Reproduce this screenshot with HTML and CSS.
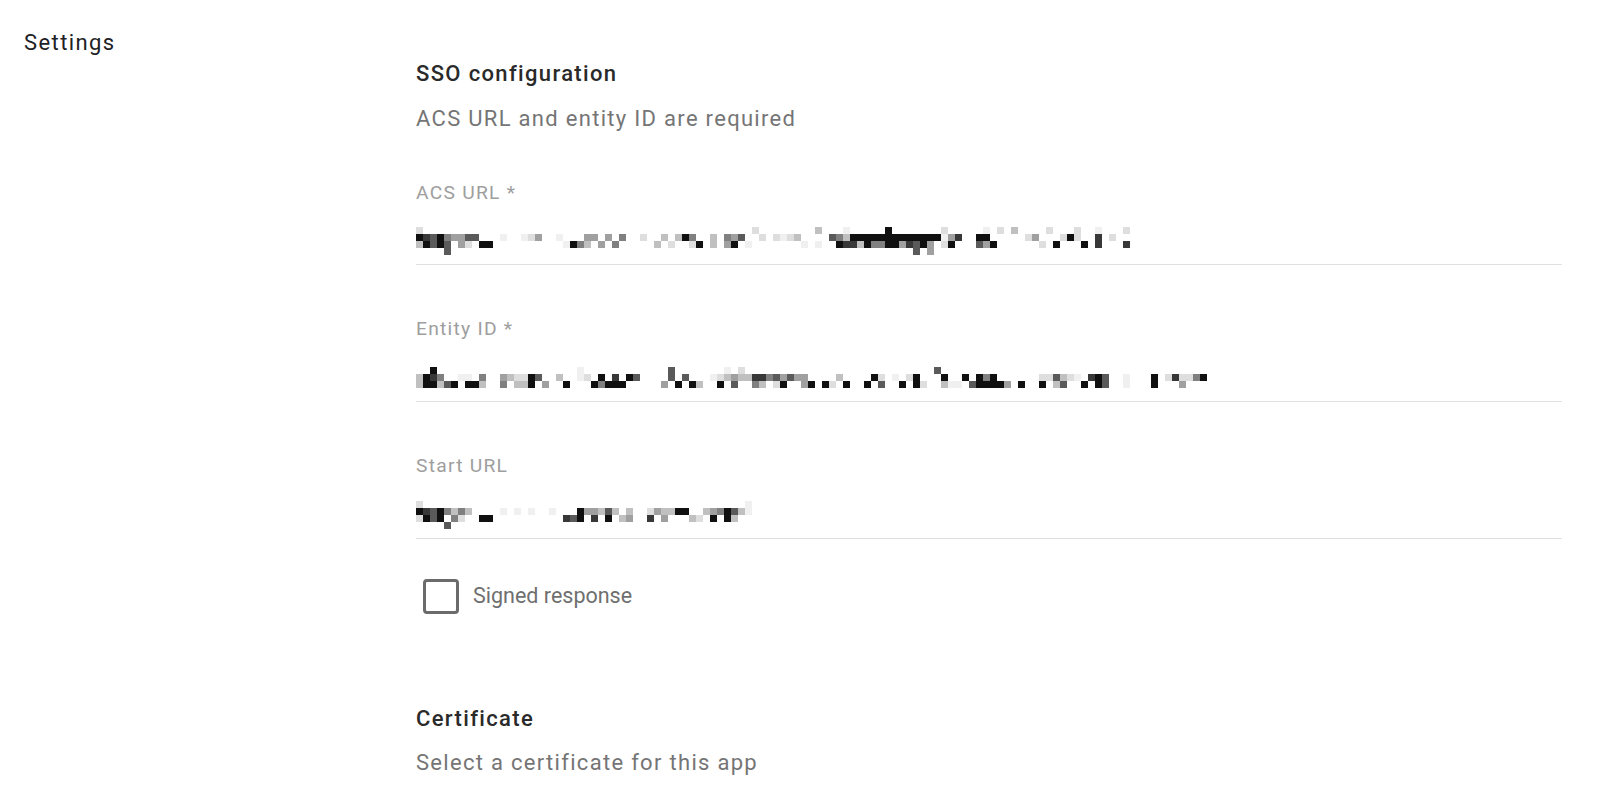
FILE: index.html
```html
<!DOCTYPE html>
<html lang="en">
<head>
<meta charset="utf-8">
<title>Settings</title>
<link rel="stylesheet" href="styles.css">
</head>
<body>
<div class="page">
  <aside class="side">
    <div class="side-title">Settings</div>
  </aside>
  <main class="content">
    <section class="section">
      <h2 class="section-title">SSO configuration</h2>
      <p class="section-desc">ACS URL and entity ID are required</p>
      <div class="fields">
        <div class="field">
          <label class="field-label">ACS URL *</label>
          <div class="field-value">
            <div class="mosaic" aria-label="redacted value" data-rows="2......... .......... .......... .......... ........2. .......3.. .1.....8.. .....2.... .1.2.3.... 2...2..1.. .2|876854466. ..1..124.. 1...44.4.5 ..2..3.385 ..3.546..2 .2123....6 5388888888 88888147.. 88.....24. ..282..7.2 ..|38686.42.8 8......... .1853.4.5. ....3.2..2 8.3.48.1.. .....1.1.. 8773855884 7684.28... 648......2 .8...8.7.. .7|....6..... .......... .......... .......... .......... .......... .......... .6.4......"></div>
          </div>
        </div>
        <div class="field">
          <label class="field-label">Entity ID *</label>
          <div class="field-value">
            <div class="mosaic mosaic-low" aria-label="redacted value" data-rows="..8....... .......... ...1...... ......6... ....1.2... .......... .......... ....6.....|3875..11.5 ..432286.. 3..12.8.7. 86....6.6. ..12343377 564644.... 3....82.1. 28...8..8. 858......2 26321.786. .1...8.272 258|388368.883 ..5.338.4. .8...85888 .....4.8.8 3..8.6..53 .28..48.82 .8..8.6..8 .82..311.6 88884.8..8 .36..8.86. .1...8...4"></div>
          </div>
        </div>
        <div class="field">
          <label class="field-label">Start URL</label>
          <div class="field-value">
            <div class="mosaic" aria-label="redacted value" data-rows="2......... .......... .......... .......... .......1|87685353.. ..1.1.1..1 ...844363. 3..243388. .3458631|2868.52..8 8......... .768.7.8.3 4..7.4...3 2.8.83|....6"></div>
          </div>
        </div>
      </div>
      <label class="checkbox-row">
        <span class="checkbox"></span>
        <span class="checkbox-text">Signed response</span>
      </label>
    </section>
    <section class="section section-cert">
      <h2 class="section-title">Certificate</h2>
      <p class="section-desc">Select a certificate for this app</p>
    </section>
  </main>
</div>
<script src="script.js"></script>
</body>
</html>
```

FILE: styles.css
```css
html, body {
  margin: 0;
  padding: 0;
  background: #ffffff;
}

body {
  font-family: Roboto, "Liberation Sans", Arial, sans-serif;
  color: #212121;
  height: 797px;
  overflow: hidden;
}

.page {
  display: flex;
  padding: 27px 38px 0 24px;
}

.side {
  width: 392px;
  flex: none;
}

.side-title {
  font-size: 22px;
  line-height: 32px;
  letter-spacing: 1.4px;
  color: #202124;
}

.content {
  flex: 1;
  margin-top: 31px;
}

.section-title {
  margin: 0 0 13px;
  font-size: 22px;
  line-height: 32px;
  font-weight: 500;
  letter-spacing: 1.35px;
  color: #2a2a2a;
}

.section-desc {
  margin: 0;
  font-size: 22px;
  line-height: 32px;
  letter-spacing: 1.3px;
  color: #757575;
}

.fields {
  margin-top: 43.6px;
  display: flex;
  flex-direction: column;
  gap: 50.2px;
}

.field {
  display: flex;
  flex-direction: column;
}

.field-label {
  font-size: 19.25px;
  line-height: 28px;
  letter-spacing: 1.25px;
  color: #9e9e9e;
}

.field-value {
  padding: 20.6px 0 9px;
  border-bottom: 1.4px solid #e0e0e0;
}

.mosaic {
  display: flex;
  flex-direction: column;
  height: 28px;
}

.mosaic-low {
  height: 24.5px;
  padding-top: 3.5px;
}

.mrow {
  display: flex;
  height: 7px;
}

.c {
  flex: none;
  width: 7px;
  height: 7px;
}

.c1 { background: #f0f0f0; }
.c2 { background: #dedede; }
.c3 { background: #c0c0c0; }
.c4 { background: #a0a0a0; }
.c5 { background: #808080; }
.c6 { background: #5a5a5a; }
.c7 { background: #383838; }
.c8 { background: #101010; }

.checkbox-row {
  margin-top: 40.2px;
  display: flex;
  align-items: center;
  gap: 14px;
  padding-left: 7px;
}

.checkbox {
  width: 36px;
  height: 35px;
  box-sizing: border-box;
  border: 3px solid #6b6b6b;
  border-radius: 4px;
  flex: none;
}

.checkbox-text {
  font-size: 21.5px;
  line-height: 32px;
  color: #6f6f6f;
}

.section-cert {
  margin-top: 89px;
}

.section-cert .section-title {
  margin-bottom: 12px;
}
```

FILE: script.js
```js
document.querySelectorAll('.mosaic').forEach(function (m) {
  var rows = m.getAttribute('data-rows').split('|');
  rows.forEach(function (r) {
    var row = document.createElement('div');
    row.className = 'mrow';
    var s = r.replace(/\s+/g, '');
    for (var i = 0; i < s.length; i++) {
      var cell = document.createElement('span');
      var ch = s.charAt(i);
      cell.className = ch === '.' ? 'c' : 'c c' + ch;
      row.appendChild(cell);
    }
    m.appendChild(row);
  });
});
```
